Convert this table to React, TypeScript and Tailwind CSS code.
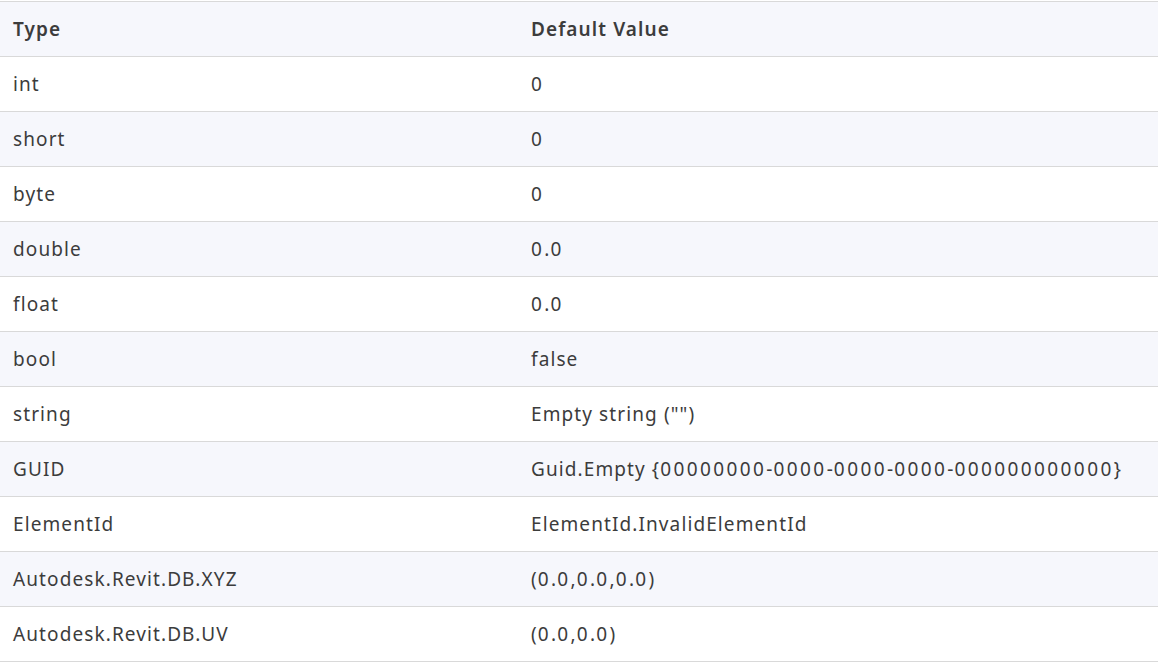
const rows: [string, string][] = [
  ["int", "0"],
  ["short", "0"],
  ["byte", "0"],
  ["double", "0.0"],
  ["float", "0.0"],
  ["bool", "false"],
  ["string", 'Empty string ("")'],
  ["GUID", "Guid.Empty {00000000-0000-0000-0000-000000000000}"],
  ["ElementId", "ElementId.InvalidElementId"],
  ["Autodesk.Revit.DB.XYZ", "(0.0,0.0,0.0)"],
  ["Autodesk.Revit.DB.UV", "(0.0,0.0)"],
];

// the source font has wide digits, so digit runs get a little more tracking
function Value({ text }: { text: string }) {
  const parts = text.split(/(\d+)/);
  return (
    <>
      {parts.map((part, i) =>
        /^\d+$/.test(part) ? (
          <span key={i} className="tracking-[2.4px]">
            {part}
          </span>
        ) : (
          <span key={i}>{part}</span>
        )
      )}
    </>
  );
}

export default function App() {
  return (
    <div className="w-[1158px] bg-white pt-px font-['Noto_Sans',sans-serif] text-[19px] tracking-[1.1px] text-[#3c3c3c]">
      <table className="w-full border-collapse">
        <thead>
          <tr className="h-[55px] border-y border-[#d9d9d9] bg-[#f6f7fc]">
            <th className="w-[518px] px-[13px] text-left font-semibold">Type</th>
            <th className="px-[13px] text-left font-semibold">Default Value</th>
          </tr>
        </thead>
        <tbody>
          {rows.map(([type, value], i) => (
            <tr
              key={type}
              className={`h-[55px] border-b border-[#d9d9d9] ${i % 2 === 1 ? "bg-[#f6f7fc]" : "bg-white"}`}
            >
              <td className="px-[13px]">{type}</td>
              <td className="px-[13px]">
                <Value text={value} />
              </td>
            </tr>
          ))}
        </tbody>
      </table>
    </div>
  );
}
